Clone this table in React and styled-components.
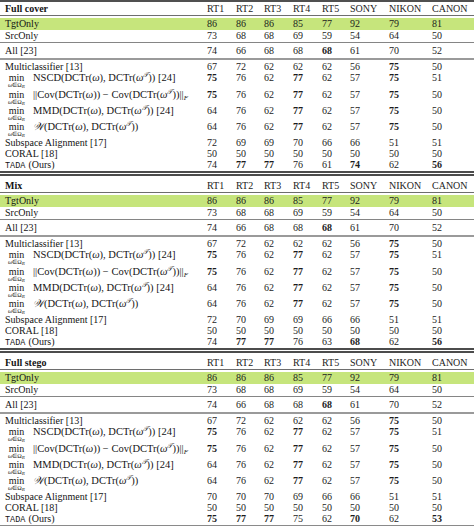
import React from 'react';
import styled, { createGlobalStyle, css } from 'styled-components';

const GlobalStyle = createGlobalStyle`
  html, body { margin: 0; padding: 0; background: #ffffff; overflow: hidden; }
  body { font-family: "Liberation Serif", "Times New Roman", serif; color: #1a1a1a; }
`;

const COLS = '207px 29px 28px 29px 29px 28px 39px 43px 42px';

const Table = styled.div`
  width: 474px;
  display: flex;
  flex-direction: column;
`;

const Section = styled.section`
  display: flex;
  flex-direction: column;
`;

const TopRule = styled.div`
  ${({ $first }) =>
    $first
      ? css`
          height: 0;
          border-top: 2px solid #505050;
        `
      : css`
          height: 1px;
          border-top: 2px solid #4c4c4c;
          border-bottom: 2px solid #4c4c4c;
          margin-bottom: 3px;
        `}
`;

const Rule = styled.div`
  height: 0;
  border-top: ${({ $w }) => $w || 1}px solid ${({ $c }) => $c || '#858585'};
`;

const Group = styled.div`
  display: flex;
  flex-direction: column;
  padding: ${({ $pt }) => $pt}px 0 ${({ $pb }) => $pb}px;
`;

const Row = styled.div`
  display: grid;
  grid-template-columns: ${COLS};
  height: ${({ $h }) => $h || 11}px;
  line-height: ${({ $lh }) => $lh || 11}px;
  font-size: 10px;
  background: ${({ $hl }) => ($hl ? '#c6e57c' : 'transparent')};
  align-items: start;
`;

const Label = styled.div`
  padding-left: 5px;
  white-space: nowrap;
  font-weight: ${({ $bold }) => ($bold ? 700 : 400)};
  display: flex;
  align-items: baseline;
  color: #141414;
`;

const Cell = styled.div`
  white-space: nowrap;
  font-weight: ${({ $bold }) => ($bold ? 700 : 400)};
  color: #1c1c1c;
`;

const MinOp = styled.span`
  display: inline-flex;
  flex-direction: column;
  align-items: center;
  width: 23px;
  margin-right: 5px;
`;

const MinWord = styled.span`
  line-height: 10px;
  font-size: 10px;
`;

const MinSub = styled.span`
  font-size: 6px;
  line-height: 5px;
  height: 5px;
  white-space: nowrap;
`;

const Expr = styled.span`
  font-size: 10.5px;
  line-height: 11px;
  white-space: nowrap;
`;

const I = styled.i`
  font-style: italic;
`;

const Sup = styled.sup`
  font-size: 7px;
  line-height: 0;
  vertical-align: 4px;
  font-style: italic;
`;

const Sub = styled.sub`
  font-size: ${({ $s }) => $s || 7}px;
  line-height: 0;
  vertical-align: ${({ $v }) => $v ?? -2}px;
  font-style: italic;
`;

const Mono = styled.span`
  font-family: "Liberation Mono", "Courier New", monospace;
  font-size: 8.5px;
  margin-right: 3px;
`;

const HEAD = ['RT1', 'RT2', 'RT3', 'RT4', 'RT5', 'SONY', 'NIKON', 'CANON'];

const Om = () => <I>ω</I>;
const OmT = () => (
  <>
    <I>ω</I>
    <Sup>𝒯</Sup>
  </>
);

const MinLabel = ({ children }) => (
  <>
    <MinOp>
      <MinWord>min</MinWord>
      <MinSub>
        <I>ω</I>∈Ω<Sub $s={5} $v={-1}>R</Sub>
      </MinSub>
    </MinOp>
    <Expr>{children}</Expr>
  </>
);

const EXPRS = {
  nscd: (
    <>
      NSCD(DCTr(<Om />), DCTr(<OmT />)) [24]
    </>
  ),
  cov: (
    <>
      ||Cov(DCTr(<Om />)) − Cov(DCTr(<OmT />))||<Sub>F</Sub>
    </>
  ),
  mmd: (
    <>
      MMD(DCTr(<Om />), DCTr(<OmT />)) [24]
    </>
  ),
  w: (
    <>
      <I>𝒲</I>(DCTr(<Om />), DCTr(<OmT />))
    </>
  ),
};

const TGT = ['86', '86', '86', '85', '77', '92', '79', '81'];
const SRC = ['73', '68', '68', '69', '59', '54', '64', '50'];
const ALL = ['74', '66', '68', '68', '*68', '61', '70', '52'];
const MIDDLE = [
  { label: 'Multiclassifier [13]', v: ['67', '72', '62', '62', '62', '56', '*75', '50'] },
  { min: 'nscd', h: 17, v: ['*75', '76', '62', '*77', '62', '57', '*75', '51'] },
  { min: 'cov', h: 16, v: ['*75', '76', '62', '*77', '62', '57', '*75', '50'] },
  { min: 'mmd', h: 16, v: ['64', '76', '62', '*77', '62', '57', '*75', '50'] },
  { min: 'w', h: 16, v: ['64', '76', '62', '*77', '62', '57', '*75', '50'] },
];
const CORAL = ['50', '50', '50', '50', '50', '50', '50', '50'];

const SECTIONS = [
  {
    title: 'Full cover',
    sub: ['72', '69', '69', '70', '66', '66', '51', '51'],
    tada: ['74', '*77', '*77', '76', '61', '*74', '62', '*56'],
  },
  {
    title: 'Mix',
    sub: ['72', '70', '69', '69', '66', '66', '51', '51'],
    tada: ['74', '*77', '*77', '76', '63', '*68', '62', '*56'],
  },
  {
    title: 'Full stego',
    sub: ['70', '70', '70', '69', '66', '66', '51', '51'],
    tada: ['*75', '*77', '*77', '75', '62', '*70', '62', '*53'],
  },
];

const Values = ({ v }) =>
  v.map((x, i) => {
    const bold = x.startsWith('*');
    return (
      <Cell key={i} $bold={bold}>
        {bold ? x.slice(1) : x}
      </Cell>
    );
  });

const DataRow = ({ label, v, ...rest }) => (
  <Row {...rest}>
    <Label>{label}</Label>
    <Values v={v} />
  </Row>
);

const TableSection = ({ data, first }) => (
  <Section>
    <TopRule $first={first} />
    <Row $h={13} $lh={13}>
      <Label $bold>{data.title}</Label>
      {HEAD.map((h) => (
        <Cell key={h}>{h}</Cell>
      ))}
    </Row>
    <Rule $c="#6e6e6e" />
    <Group $pt={2} $pb={1}>
      <DataRow label="TgtOnly" v={TGT} $hl $h={12} $lh={12} />
      <DataRow label="SrcOnly" v={SRC} />
    </Group>
    <Rule />
    <Group $pt={2} $pb={1}>
      <DataRow label="All [23]" v={ALL} $h={12} $lh={12} />
    </Group>
    <Rule $w={2} $c="#9a9a9a" />
    <Group $pt={1} $pb={1}>
      {MIDDLE.map((r, i) =>
        r.min ? (
          <DataRow key={i} label={<MinLabel>{EXPRS[r.min]}</MinLabel>} v={r.v} $h={r.h} />
        ) : (
          <DataRow key={i} label={r.label} v={r.v} />
        )
      )}
      <DataRow label="Subspace Alignment [17]" v={data.sub} />
      <DataRow label="CORAL [18]" v={CORAL} />
      <DataRow
        label={
          <>
            <Mono>TADA</Mono>(Ours)
          </>
        }
        v={data.tada}
      />
    </Group>
  </Section>
);

export default function App() {
  return (
    <>
      <GlobalStyle />
      <Table>
        {SECTIONS.map((s, i) => (
          <TableSection key={s.title} data={s} first={i === 0} />
        ))}
        <Rule $w={2} $c="#8a8a8a" />
      </Table>
    </>
  );
}
